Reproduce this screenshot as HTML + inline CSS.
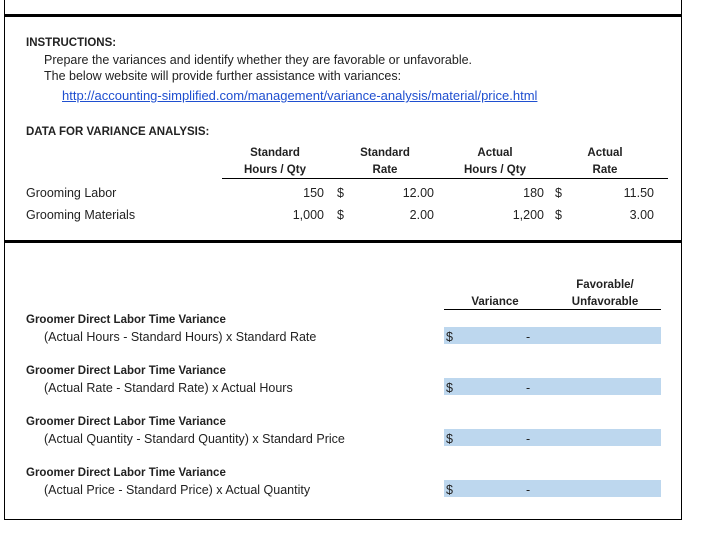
<!DOCTYPE html>
<html><head><style>
body{margin:0;width:708px;height:546px;background:#fff;font-family:"Liberation Sans",sans-serif;font-size:12.5px;color:#222;position:relative;overflow:hidden}
div{position:absolute;white-space:nowrap;line-height:15px}
.b{font-weight:bold;font-size:11.5px}
.r{text-align:right}
.c{text-align:center}
.blue{background:#bdd7ee;height:17px;left:444px;width:217px}
</style></head><body>
<div style="left:4px;top:0;width:676px;height:519px;border-left:1px solid #000;border-right:1px solid #000;border-bottom:1px solid #000"></div>
<div style="left:4px;top:14px;width:677px;height:3px;background:#000"></div>
<div style="left:4px;top:240px;width:677px;height:3px;background:#000"></div>

<div class="b" style="left:26px;top:36px">INSTRUCTIONS:</div>
<div style="left:44px;top:53px">Prepare the variances and identify whether they are favorable or unfavorable.</div>
<div style="left:44px;top:69px">The below website will provide further assistance with variances:</div>
<div style="left:62px;top:88px;color:#1f4fd0;text-decoration:underline;font-size:13px">http://accounting-simplified.com/management/variance-analysis/material/price.html</div>
<div class="b" style="left:26px;top:125px">DATA FOR VARIANCE ANALYSIS:</div>

<div class="b c" style="left:225px;width:100px;top:146px">Standard</div>
<div class="b c" style="left:225px;width:100px;top:163px">Hours / Qty</div>
<div class="b c" style="left:335px;width:100px;top:146px">Standard</div>
<div class="b c" style="left:335px;width:100px;top:163px">Rate</div>
<div class="b c" style="left:445px;width:100px;top:146px">Actual</div>
<div class="b c" style="left:445px;width:100px;top:163px">Hours / Qty</div>
<div class="b c" style="left:555px;width:100px;top:146px">Actual</div>
<div class="b c" style="left:555px;width:100px;top:163px">Rate</div>
<div style="left:222px;top:178px;width:446px;height:1px;background:#000"></div>

<div style="left:26px;top:186px">Grooming Labor</div>
<div class="r" style="left:260px;width:64px;top:186px">150</div>
<div style="left:337px;top:186px">$</div>
<div class="r" style="left:370px;width:64px;top:186px">12.00</div>
<div class="r" style="left:480px;width:64px;top:186px">180</div>
<div style="left:555px;top:186px">$</div>
<div class="r" style="left:590px;width:64px;top:186px">11.50</div>

<div style="left:26px;top:208px">Grooming Materials</div>
<div class="r" style="left:260px;width:64px;top:208px">1,000</div>
<div style="left:337px;top:208px">$</div>
<div class="r" style="left:370px;width:64px;top:208px">2.00</div>
<div class="r" style="left:480px;width:64px;top:208px">1,200</div>
<div style="left:555px;top:208px">$</div>
<div class="r" style="left:590px;width:64px;top:208px">3.00</div>

<div class="b c" style="left:555px;width:100px;top:278px">Favorable/</div>
<div class="b c" style="left:445px;width:100px;top:295px">Variance</div>
<div class="b c" style="left:555px;width:100px;top:295px">Unfavorable</div>
<div style="left:444px;top:309px;width:217px;height:1px;background:#000"></div>

<div class="b" style="left:26px;top:313px">Groomer Direct Labor Time Variance</div>
<div style="left:44px;top:330px">(Actual Hours - Standard Hours) x Standard Rate</div>
<div class="blue" style="top:327px"></div>
<div style="left:446px;top:330px">$</div><div style="left:526px;top:330px">-</div>

<div class="b" style="left:26px;top:364px">Groomer Direct Labor Time Variance</div>
<div style="left:44px;top:381px">(Actual Rate - Standard Rate) x Actual Hours</div>
<div class="blue" style="top:378px"></div>
<div style="left:446px;top:381px">$</div><div style="left:526px;top:381px">-</div>

<div class="b" style="left:26px;top:415px">Groomer Direct Labor Time Variance</div>
<div style="left:44px;top:432px">(Actual Quantity - Standard Quantity) x Standard Price</div>
<div class="blue" style="top:429px"></div>
<div style="left:446px;top:432px">$</div><div style="left:526px;top:432px">-</div>

<div class="b" style="left:26px;top:466px">Groomer Direct Labor Time Variance</div>
<div style="left:44px;top:483px">(Actual Price - Standard Price) x Actual Quantity</div>
<div class="blue" style="top:480px"></div>
<div style="left:446px;top:483px">$</div><div style="left:526px;top:483px">-</div>
</body></html>
